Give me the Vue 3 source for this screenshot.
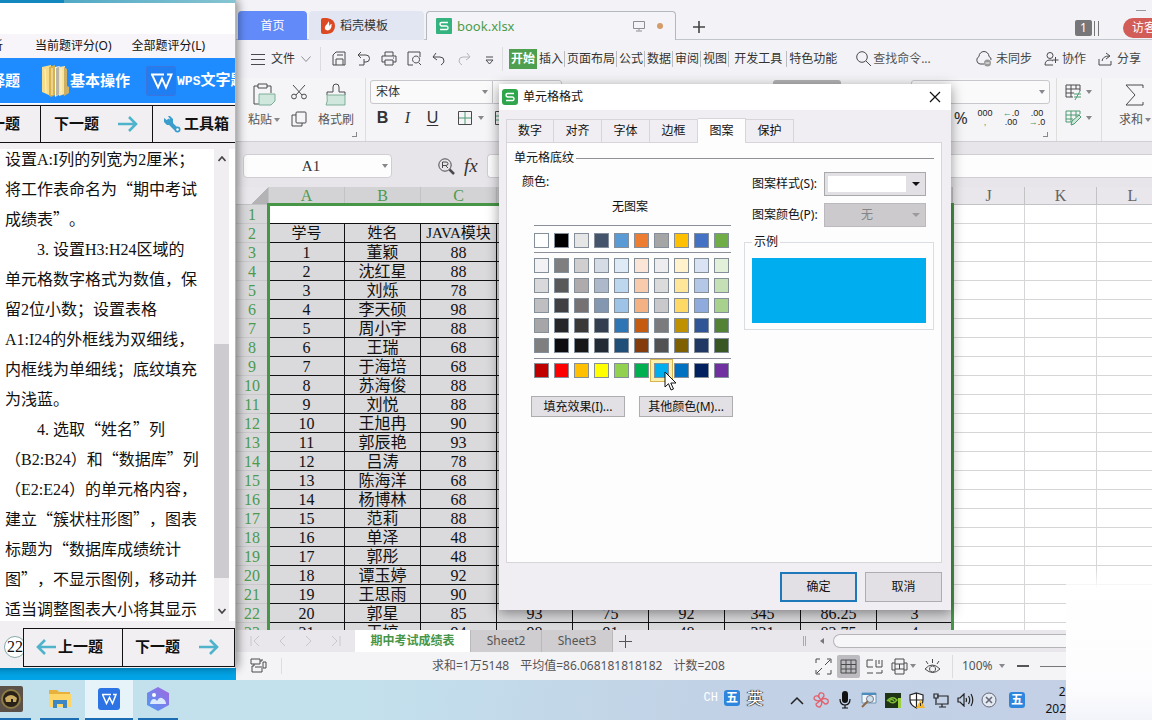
<template>
  <div class="desktop" lang="zh-CN">
    <main class="workspace">
      <!-- 表格窗口 -->
      <section class="wps">
        <header class="tabbar">
          <button class="tab tab--home">首页</button>
          <button class="tab tab--docer">
            <svg width="14" height="16" viewBox="0 0 14 16"><path d="M0 2q0-2 2-2h4q8 1 8 8t-8 8H2q-2 0-2-2z" fill="#dc4a24" /><path d="M7 3c1 3-4 4-3 8 1 2 5 2 6-1 1-2 0-3 1-4-2 0-3 2-3 3 0-2 1-4-1-6z" fill="#fff" /></svg>
            稻壳模板
          </button>
          <div class="tab tab--book">
            <svg width="16" height="16" viewBox="0 0 16 16"><rect width="16" height="16" rx="1" fill="#35b37e" /><path d="M12 4.500H5.500Q4 4.500 4 6t1.500 2h5Q12 8 12 9.800t-1.500 1.700H4" fill="none" stroke="#fff" stroke-width="1.400" /></svg>
            <span class="tab__name">book.xlsx</span>
            <svg class="line grey" width="12" height="12" viewBox="0 0 12 12"><path d="M.5 1.500h11v7H.5zM6 8.500v2M3 11h6" /></svg>
            <i class="dot"></i>
          </div>
          <button class="tab-add" aria-label="新建"><svg width="12" height="12" viewBox="0 0 12 12"><path d="M6 0v12M0 6h12" stroke="#444" stroke-width="1.600" /></svg></button>
          <div class="tabbar__right">
            <span class="count">1</span><i class="bars"></i>
            <button class="guest">访客登录</button>
            <i class="minimise"></i>
          </div>
        </header>

        <nav class="menubar">
          <button class="file">
            <svg class="line" width="14" height="11" viewBox="0 0 14 11"><path d="M0 .5h14M0 5.500h14M0 10.500h14" /></svg>
            文件
            <svg class="line grey" width="10" height="6" viewBox="0 0 10 6"><path d="M.5.5 5 5.500 9.500.5" /></svg>
          </button>
          <div class="quick">
            <button v-for="q in quick" :key="q.name" :aria-label="q.name">
              <svg class="line" :class="{ faint: q.faint }" width="16" height="16" viewBox="0 0 16 16"><path :d="q.d" /></svg>
            </button>
          </div>
          <button v-for="m in menus" :key="m" class="menu" :class="{ 'menu--on': m === '开始', 'menu--wide': m === '开发工具' }">{{ m }}</button>
          <label class="search">
            <svg class="line" width="16" height="16" viewBox="0 0 16 16"><circle cx="6" cy="6" r="5.300" /><path d="m10 10 5 5" /></svg>
            <input type="text" placeholder="查找命令..." />
          </label>
          <div class="menubar__right">
            <button><svg class="line" width="18" height="16" viewBox="0 0 18 16"><path d="M9 13H5a4 4 0 0 1-1-7.500 5 5 0 0 1 10 0Q16.500 6.500 16 9" /><circle cx="12.500" cy="12" r="3.500" fill="#999" stroke="none" /><path d="M10.500 12h4" stroke="#fff" /></svg>未同步</button>
            <button><svg class="line" width="15" height="14" viewBox="0 0 15 14"><circle cx="6" cy="3.500" r="3" /><path d="M9 13H1q0-5 5-5 2 0 3 1M11.500 5v6M8.500 8h6" /></svg>协作</button>
            <button><svg class="line" width="16" height="14" viewBox="0 0 16 14"><path d="M1 7v6h12V9M4 9q1-5 7-5M8 1l4 3-4 3" /></svg>分享</button>
          </div>
        </nav>

        <div class="ribbon">
          <div class="clip">
            <button class="clip__big">
              <svg class="line" width="24" height="24" viewBox="0 0 24 24"><path d="M6 3H2v18h5M15 3h4v7M6 1h9v4H6z" /><path d="M7 11h16v7l-4 4H7z" fill="#cfe7dc" stroke="#7fae98" /></svg>
              <span>粘贴<i class="caret"></i></span>
            </button>
            <div class="clip__pair">
              <button aria-label="剪切"><svg class="line" width="16" height="15" viewBox="0 0 16 15"><path d="m2 0 9 10M14 0 5 10" /><circle cx="3" cy="11.500" r="2.400" /><circle cx="13" cy="11.500" r="2.400" /></svg></button>
              <button aria-label="复制"><svg class="line" width="16" height="16" viewBox="0 0 16 16"><rect x="5" y="1" width="10" height="11" rx="1" /><path d="M5 4H1v11h10v-3" /></svg></button>
            </div>
            <button class="clip__big">
              <svg class="line" width="22" height="24" viewBox="0 0 22 24"><path d="M2 12V9h6V4q0-3 3-3t3 3v5h6v3" /><path d="M2 12h18v10H1q2-3 1-10z" fill="#cfe7dc" stroke="#7fae98" /></svg>
              <span>格式刷</span>
            </button>
            <i class="corner"></i>
          </div>
          <div class="fonts">
            <div class="fonts__row">
              <label class="combo"><select aria-label="字体"><option>宋体</option></select><i class="caret"></i></label>
              <label class="combo combo--size"><select aria-label="字号"><option>12</option></select><i class="caret"></i></label>
            </div>
            <div class="fonts__row fonts__row--marks">
              <button class="b">B</button><button class="it">I</button><button class="u">U</button>
              <button aria-label="边框"><svg class="line" width="14" height="14" viewBox="0 0 14 14"><path d="M.5.5h13v13H.5z" /><path d="M7 1v12M1 7h12" stroke="#4d9a70" /></svg><i class="caret"></i></button>
              <button aria-label="填充"><svg class="line" width="14" height="14" viewBox="0 0 14 14"><path d="M13 .5H.5v13H13" /><path d="M1 5h12M1 9h12M5 13l8-8" stroke="#4d9a70" /></svg></button>
            </div>
          </div>
          <button class="merge" aria-label="合并居中"></button>
          <div class="number">
            <label class="combo combo--num"><select aria-label="数字格式"><option>常规</option></select><i class="caret"></i></label>
            <div class="number__row">
              <button class="pct">%</button>
              <button class="digits">000<br /><em>,</em></button>
              <button class="digits"><em>←</em>.0<br />.00</button>
              <button class="digits">.00<br /><em>→</em>.0</button>
            </div>
            <i class="corner"></i>
          </div>
          <div class="cells">
            <button aria-label="条件格式"><svg class="line" width="17" height="16" viewBox="0 0 17 16"><path d="M8 13H1V1h14v6M1 5h14M1 9h8M6 1v12M11 1v4" /><path d="M9 10h7M9 13h7M15 7l-5 9" stroke="#4d9a70" /></svg><i class="caret"></i></button>
            <button aria-label="表格样式"><svg class="line" width="17" height="16" viewBox="0 0 17 16"><path d="M6 12H1V1h14v3M1 5h14M1 9h7M6 1v11M11 1v6" stroke="#4d9a70" /><path d="m7 11 7-6 2 2-7 7-3 1z" fill="#cfe7dc" stroke="#4d9a70" /></svg><i class="caret"></i></button>
          </div>
          <button class="sum">
            <svg class="line" width="20" height="22" viewBox="0 0 20 22"><path d="M18 4V1H1l9 10L1 21h17v-3" /></svg>
            <span>求和<i class="caret"></i></span>
          </button>
        </div>

        <div class="formula">
          <label class="namebox"><input value="A1" aria-label="名称框" /><i class="caret"></i></label>
          <div class="formula__icons">
            <svg class="line" width="17" height="17" viewBox="0 0 17 17"><circle cx="7" cy="7" r="6.200" /><path d="M4.500 10V4H8q2 0 2 1.700T8 7.500H4.500M7.500 7.500 10 10" /><path d="m11.500 11.500 4.500 4.500" stroke-width="2.500" /></svg>
            <span class="fx">fx</span>
          </div>
          <input class="formula__input" aria-label="编辑栏" />
        </div>

        <div class="sheet">
          <table>
            <colgroup>
              <col class="col-head" />
              <col v-for="c in 9" :key="c" class="col-data" />
              <col v-for="c in 4" :key="'e' + c" class="col-blank" />
            </colgroup>
            <thead>
              <tr>
                <th class="all"></th>
                <th v-for="(c, i) in columns" :key="c" :class="{ picked: i < 9 }">{{ c }}</th>
              </tr>
            </thead>
            <tbody>
              <tr>
                <th>1</th>
                <td class="cell cell--title" colspan="9"></td>
                <td v-for="n in 4" :key="n"></td>
              </tr>
              <tr v-for="(r, i) in rows" :key="i" :class="{ heading: i === 0 }">
                <th>{{ i + 2 }}</th>
                <td v-for="n in 9" :key="n" class="cell">{{ r[n - 1] }}</td>
                <td v-for="n in 4" :key="'e' + n"></td>
              </tr>
            </tbody>
          </table>
          <i class="selection"></i>
        </div>

        <div class="sheetbar">
          <div class="pager">
            <svg v-for="d in pager" :key="d" width="10" height="12" viewBox="0 0 10 12"><path :d="d" fill="none" stroke="#c9c7cb" /></svg>
          </div>
          <button class="stab stab--on">期中考试成绩表</button>
          <button class="stab">Sheet2</button>
          <button class="stab">Sheet3</button>
          <button class="stab-add" aria-label="新建工作表"><svg width="13" height="13" viewBox="0 0 13 13"><path d="M6.500 0v13M0 6.500h13" stroke="#555" /></svg></button>
          <div class="hscroll"><i class="grip"></i><span class="hscroll__arrow"></span><span class="hscroll__track"></span></div>
        </div>

        <footer class="status">
          <svg class="status__rec line" width="17" height="16" viewBox="0 0 17 16"><path d="M1 1h9v5H1zM10 3h2v-2M4 6v2H2v6h10v-4M5 9h7M13 4h3v6h-3z" /></svg>
          <p class="status__text"><span>求和=1万5148</span><span>平均值=86.068181818182</span><span>计数=208</span></p>
          <div class="views">
            <button v-for="v in views" :key="v.name" :aria-label="v.name" :class="{ on: v.name === '普通' }">
              <svg class="line" width="17" height="17" viewBox="0 0 17 17"><path :d="v.d" /></svg><i v-if="v.name === '阅读'" class="caret"></i>
            </button>
          </div>
          <div class="zoom">
            <span>100%</span><i class="caret"></i><i class="minus"></i>
            <input type="range" min="10" max="400" value="250" aria-label="缩放" />
          </div>
        </footer>
      </section>

      <!-- 答题窗口 -->
      <section class="exam">
        <div class="exam__strip"></div>
        <div class="exam__title"></div>
        <div class="exam__menu"><button class="first">操作解析</button><button>当前题评分(O)</button><button>全部题评分(L)</button></div>
        <div class="exam__types">
          <button class="t-choice">选择题</button>
          <button class="t-basic">
            <svg width="28" height="34" viewBox="0 0 28 34"><path d="m1 3 9-2v31l-9-4z" fill="#f6dc8a" /><path d="m8 3 6-2v30l-4 2-2-2z" fill="#d6b252" /><path d="m14 3 5-1v28l-5 3z" fill="#fff" /><path d="m15 4 4-2v28l-4 2z" fill="#b8b4a6" /><path d="m18 3 6-1v28l-6 2z" fill="#f5e4a4" /><path d="m23 3 3 2v17l2 1v6l-5 3z" fill="#ceb064" /><path d="m4 5 1 24M11 4v27M20 4v26" stroke="#fff4c4" /></svg>
            基本操作
          </button>
          <button class="t-word">
            <svg width="30" height="30" viewBox="0 0 30 30"><rect x=".5" y=".5" width="29" height="29" rx="2" fill="#1f7ff2" stroke="#3b74dd" /><path d="M5 8.500h13M6 8.500l6 13 4-9 4 9 5.500-13H21" fill="none" stroke="#fff" stroke-width="1.900" /></svg>
            <span><b class="latin">WPS</b>文字题</span>
          </button>
        </div>
        <div class="exam__tools">
          <button class="w-prev">上一题</button>
          <button class="w-next">下一题<svg width="20" height="16" viewBox="0 0 20 16"><path d="M0 8h18M11 1l7 7-7 7" fill="none" stroke="#4fb4cb" stroke-width="2.600" /></svg></button>
          <button class="w-box"><svg width="18" height="18" viewBox="0 0 18 18"><path d="m4 5 9 9" stroke="#3a9dcb" stroke-width="4" /><path d="M1 3v4l3 3h4l2-2V4L7 1H5l2 3-2 2z" fill="#3a9dcb" /><circle cx="14.500" cy="14.500" r="3" fill="#3a9dcb" /><circle cx="14.500" cy="14.500" r="1.200" fill="#fff" /></svg>工具箱</button>
        </div>
        <div class="exam__body">
          <div class="question">
            <p v-for="(l, i) in lines" :key="i" :class="{ indent: /^\d/.test(l) }"><span v-for="(s, k) in split(l)" :key="k" :class="{ han: s.han }">{{ s.text }}</span></p>
          </div>
          <div class="vscroll">
            <svg width="8" height="6" viewBox="0 0 8 6"><path d="m.5 5 3.500-4 3.500 4" /></svg>
            <span class="vscroll__track"><i></i></span>
            <svg width="8" height="6" viewBox="0 0 8 6"><path d="m.5 1 3.500 4 3.500-4" /></svg>
          </div>
        </div>
        <div class="exam__foot">
          <span class="number-ring">22</span>
          <div class="foot-box">
            <button class="f-prev"><svg width="20" height="16" viewBox="0 0 20 16"><path d="M20 8H2M9 1 2 8l7 7" fill="none" stroke="#4fb4cb" stroke-width="2.600" /></svg>上一题</button>
            <button class="f-next">下一题<svg width="20" height="16" viewBox="0 0 20 16"><path d="M0 8h18M11 1l7 7-7 7" fill="none" stroke="#4fb4cb" stroke-width="2.600" /></svg></button>
          </div>
        </div>
      </section>

      <!-- 单元格格式对话框 -->
      <section class="dialog" role="dialog" aria-label="单元格格式">
        <header class="dialog__head">
          <svg width="16" height="16" viewBox="0 0 16 16"><rect width="16" height="16" rx="3" fill="#2fa64c" /><path d="M12 4.500H5.500Q4 4.500 4 6t1.500 2h5Q12 8 12 9.800t-1.500 1.700H4" fill="none" stroke="#fff" stroke-width="1.400" /></svg>
          <h1>单元格格式</h1>
          <button aria-label="关闭"><svg width="12" height="12" viewBox="0 0 12 12"><path d="m1 1 10 10M11 1 1 11" stroke="#111" stroke-width="1.200" /></svg></button>
        </header>
        <div class="dialog__tabs">
          <button v-for="t in tabs" :key="t" :class="{ on: t === activeTab }" @click="activeTab = t">{{ t }}</button>
        </div>
        <div class="pane">
          <h2>单元格底纹</h2>
          <div class="pane__cols">
            <div class="colors">
              <p class="colors__label">颜色:</p>
              <button class="none">无图案</button>
              <div v-for="(group, g) in palette" :key="g" class="group">
                <div v-for="(row, r) in group" :key="r" class="swatches">
                  <button v-for="c in row" :key="c" class="swatch" :class="{ 'swatch--on': c === picked }" :style="{ backgroundColor: c }" :aria-label="c" @click="picked = c">
                    <svg v-if="c === '#00aeef'" class="cursor" width="13" height="20" viewBox="0 0 13 20"><path d="M1 1v15l3.500-3.300L7 19l2.500-1-2.700-6H12z" fill="#fff" stroke="#111" /></svg>
                  </button>
                </div>
              </div>
              <div class="more"><button>填充效果(I)...</button><button>其他颜色(M)...</button></div>
            </div>
            <div class="pattern">
              <div class="field"><label for="style">图案样式(S):</label><span class="drop"><select id="style"><option></option></select><i></i></span></div>
              <div class="field"><label for="pcolor">图案颜色(P):</label><span class="drop drop--off"><select id="pcolor" disabled><option>无</option></select><i></i></span></div>
              <fieldset><legend>示例</legend><div class="sample" :style="{ backgroundColor: picked }"></div></fieldset>
            </div>
          </div>
        </div>
        <footer class="dialog__foot"><button class="ok">确定</button><button>取消</button></footer>
      </section>
    </main>

    <footer class="taskbar">
      <div class="apps">
        <button class="app-a"><svg width="26" height="26" viewBox="0 0 26 26"><rect width="26" height="26" rx="2" fill="#5c5148" /><circle cx="14" cy="13" r="9" fill="#292018" stroke="#8d7b45" stroke-width="2" /><path d="M8 12q6-6 12 0l-1 4h-3v-3h-2v3H9z" fill="#c9ab61" /></svg></button>
        <button class="app-b"><svg width="24" height="22" viewBox="0 0 24 22"><path d="M1 2h8l2 2h11v15H1z" fill="#e8b13a" /><path d="M1 6h22v13H1z" fill="#ffd768" /><path d="M5 20v-8h14v8h-4v-4H9v4z" fill="#3d88c4" /></svg></button>
        <button class="app-c"><svg width="22" height="22" viewBox="0 0 22 22"><rect width="22" height="22" rx="3" fill="#2c73e5" /><path d="M4 6.500h9M4.500 6.500l4 9 3-6 3 6 3.500-9H15" fill="none" stroke="#fff" stroke-width="1.500" /></svg></button>
        <button class="app-d"><svg width="24" height="24" viewBox="0 0 24 24"><defs><linearGradient id="hex" x1="0" y1="1" x2="1" y2="0"><stop offset="0" stop-color="#4d9cf5" /><stop offset="1" stop-color="#a366e0" /></linearGradient></defs><path d="m12 0 11 6v12l-11 6-11-6V6z" fill="url(#hex)" /><path d="M4 17q1-5 4-5 2 0 3 2 2-4 5-3 4 2 4 6z" fill="#dceaff" /><circle cx="8" cy="8" r="2" fill="#fff" /></svg></button>
      </div>
      <div class="ime"><span class="ime__ch">CH</span><span class="wu">五</span><span class="ime__en">英</span></div>
      <div class="tray">
        <button aria-label="更多"><svg width="14" height="9" viewBox="0 0 14 9"><path d="m1 8 6-6 6 6" fill="none" stroke="#222" stroke-width="1.500" /></svg></button>
        <button aria-label="花"><svg width="16" height="16" viewBox="0 0 16 16"><g fill="none" stroke="#e2606c" stroke-width="1.300"><path d="M8 8Q4 4 7 1q4-1 4 3L8 8q4-3 7 0 1 4-3 4L8 8q2 4-1 7-4 0-4-3l5-4Q4 10 1 7q0-4 4-3z" /></g></svg></button>
        <button aria-label="麦克风"><svg width="12" height="18" viewBox="0 0 12 18"><rect x="3" width="6" height="12" rx="3" fill="#111" /><path d="M1 8q0 6 5 6t5-6M6 14v3M3 17h6" fill="none" stroke="#111" stroke-width="1.200" /></svg></button>
        <button aria-label="截图"><svg width="16" height="16" viewBox="0 0 16 16"><path d="M1 1h14v10H1z" fill="#eef4f8" stroke="#6f9ab8" /><path d="M1 1h14v2H1z" fill="#4d8cc0" /><circle cx="9" cy="7" r="3.500" fill="#cfe2ee" stroke="#778" /><path d="m7 9-6 6" stroke="#8a6a4a" stroke-width="2" /></svg></button>
        <button aria-label="显卡"><svg width="16" height="15" viewBox="0 0 16 15"><path d="M0 0h16v15H0z" fill="#1f3414" /><path d="M2 8q5-6 10-1-4 5-8 1 3-3 5 0" fill="none" stroke="#7ebc33" stroke-width="1.500" /><path d="M13 5h3v10h-3z" fill="#9bd03e" /></svg></button>
        <button aria-label="安全"><svg width="16" height="17" viewBox="0 0 16 17"><path d="m7.500 1 6.500 2v5q0 5-6.500 8Q1 13 1 8V3zM7.500 1v15M1 8h13" fill="#fff" stroke="#222" stroke-width="1.200" /><path d="m11.500 8 4.500 8H7z" fill="#f4b52a" /><path d="M11.500 11v3" stroke="#333" /></svg></button>
        <button aria-label="网络"><svg width="16" height="15" viewBox="0 0 16 15"><path d="M4 3h11v8H4M9 11v3M6 14h7M1 1h4v4H1zM3 5v7" fill="none" stroke="#222" stroke-width="1.200" /></svg></button>
        <button aria-label="音量"><svg width="17" height="14" viewBox="0 0 17 14"><path d="M1 5h2l4-4v12L3 9H1zM9 5q1 2 0 4M11.500 3q2.500 4 0 8M14 1q3.500 6 0 12" fill="none" stroke="#222" stroke-width="1.200" /></svg></button>
        <button aria-label="断开"><svg width="16" height="16" viewBox="0 0 16 16"><circle cx="8" cy="8" r="7" fill="#e3eaf2" stroke="#667" /><path d="m5 5 6 6M11 5l-6 6" stroke="#667" stroke-width="1.600" /></svg></button>
      </div>
      <span class="wu wu--tray">五</span>
      <div class="clock"><span>21:36</span><span>2021/3/24</span></div>
    </footer>
    <div class="ghost"></div>
  </div>
</template>

<script setup>
import { ref } from 'vue'

const activeTab = ref('图案')
const picked = ref('#00aeef')   // 当前底纹颜色

const tabs = ['数字', '对齐', '字体', '边框', '图案', '保护']
const menus = ['开始', '插入', '页面布局', '公式', '数据', '审阅', '视图', '开发工具', '特色功能']
const columns = ['A', 'B', 'C', 'D', 'E', 'F', 'G', 'H', 'I', 'J', 'K', 'L', 'M']

// 快速访问工具栏
const quick = [
  { name: '保存', d: 'M2 14V4l3-3h9v13zM5 14V8h7v6M6 4h6' },
  { name: '输出', d: 'M2 4h8a3.500 3.500 0 0 1 0 7H8M5 1 2 4l3 3M8 8v6H3' },
  { name: '打印', d: 'M4 5V1h8v4M4 11H1V5h14v6h-3M4 9h8v5H4zM12 7h1' },
  { name: '预览', d: 'M7 14H2V1h12v5M10 5a3.500 3.500 0 1 0 .1 0M12.500 11.500 15 14' },
  { name: '撤销', d: 'M5 2 2 6l4 3M2 6h7q4 0 4 4 0 2-3 4' },
  { name: '恢复', d: 'M11 2l3 4-4 3M14 6H7q-4 0-4 4 0 2 3 4', faint: true },
  { name: '自定义', d: 'M5 6h7M5 9l3.500 4L12 9z' }
]

const views = [
  { name: '全屏', d: 'M1 5V1h4M12 1h4v4M16 12v4h-4M5 16H1v-4M10 7l5-5M7 10l-5 5' },
  { name: '普通', d: 'M1 2h15v13H1zM1 6.500h15M1 11h15M6 2v13M11 2v13' },
  { name: '分页', d: 'M7 9H1V2h6M7 15H1M10 2v7h6V2M16 12v3h-6M13 2v4' },
  { name: '阅读', d: 'M4 1h9v15H4zM4 6h9M4 11h9M4 5H1v7h3M13 5h3v7h-3M8.500 6v5' },
  { name: '护眼', d: 'M1 11q7-8 15 0-7 7-15 0M8.500 8a3 3 0 1 0 .1 0M8.500 5V1M4 6 2 3M13 6l2-3' }
]

const pager = ['M1 1v10M9 1 4 6l5 5', 'M8 1 3 6l5 5', 'M2 1l5 5-5 5', 'M9 1v10M1 1l5 5-5 5']

const rows = [
  ['学号', '姓名', 'JAVA模块'],
  [1, '董颖', 88],
  [2, '沈红星', 88],
  [3, '刘烁', 78],
  [4, '李天硕', 98],
  [5, '周小宇', 88],
  [6, '王瑞', 68],
  [7, '于海培', 68],
  [8, '苏海俊', 88],
  [9, '刘悦', 88],
  [10, '王旭冉', 90],
  [11, '郭辰艳', 93],
  [12, '吕涛', 78],
  [13, '陈海洋', 68],
  [14, '杨博林', 68],
  [15, '范莉', 88],
  [16, '单泽', 48],
  [17, '郭彤', 48],
  [18, '谭玉婷', 92],
  [19, '王思雨', 90],
  [20, '郭星', 85, 93, 75, 92, 345, '86.25', 3],
  [21, '王婷', 94, 98, 91, 48, 331, '82.75', 4]
]

const palette = [
  [['#ffffff', '#000000', '#e7e6e6', '#44546a', '#5b9bd5', '#ed7d31', '#a5a5a5', '#ffc000', '#4472c4', '#70ad47']],
  [
    ['#f2f2f5', '#7f7f80', '#d0cecf', '#d6dce5', '#deebf7', '#fbe5d6', '#ededf0', '#fff2cc', '#dae3f3', '#e2f0d9'],
    ['#d9d9dc', '#595959', '#afabac', '#adb9ca', '#bdd7ee', '#f8cbad', '#dbdbdc', '#ffe699', '#b4c7e7', '#c5e0b4'],
    ['#bfbfc1', '#404042', '#767172', '#8497b0', '#9dc3e6', '#f4b183', '#c9c9cb', '#ffd966', '#8faadc', '#a9d18e'],
    ['#a6a6a8', '#262628', '#3b3838', '#333f50', '#2e75b6', '#c55a11', '#7b7b7d', '#bf9000', '#2f5597', '#548235'],
    ['#7f7f7f', '#0d0d0f', '#171717', '#222a35', '#1f4e79', '#843c0c', '#525252', '#7f6000', '#203864', '#385723']
  ],
  [['#c00000', '#ff0000', '#ffc001', '#ffff00', '#92d050', '#00b050', '#00aeef', '#0070c0', '#002060', '#7030a0']]
]

const lines = [
  '设置A:I列的列宽为2厘米；',
  '将工作表命名为“期中考试',
  '成绩表”。',
  '3. 设置H3:H24区域的',
  '单元格数字格式为数值，保',
  '留2位小数；设置表格',
  'A1:I24的外框线为双细线，',
  '内框线为单细线；底纹填充',
  '为浅蓝。',
  '4. 选取“姓名”列',
  '（B2:B24）和“数据库”列',
  '（E2:E24）的单元格内容，',
  '建立“簇状柱形图”，图表',
  '标题为“数据库成绩统计',
  '图”，不显示图例，移动并',
  '适当调整图表大小将其显示'
]

// 西文和汉字分开排，引号跟随汉字取全角
function split(line) {
  return line.split(/([\x20-\x7e]+)/).filter(Boolean).map(text => ({ text, han: !/^[\x20-\x7e]/.test(text) }))
}
</script>

<style>
html, body { margin: 0; overflow: hidden; }
</style>

<style scoped>
.desktop {
  position: relative;
  display: flex;
  flex-direction: column;
  height: 100vh;
  overflow: hidden;
  background: #03a5e8;
  color: #333;
  font: 12px/16px "Noto Sans", "Noto Sans CJK SC", sans-serif;
  cursor: default;
}
.desktop * { box-sizing: border-box; }
p, h1, h2 { margin: 0; font: inherit; }
button, input, select {
  margin: 0;
  padding: 0;
  border: 0;
  border-radius: 0;
  background: none;
  color: inherit;
  font: inherit;
  outline: none;
}
button { white-space: nowrap; }
select { appearance: none; }
svg { display: block; flex: none; }
.line { fill: none; stroke: #4a4a4d; stroke-width: 1; }
.grey { stroke: #8e8e92; }
.faint { stroke: #b6b6ba; }
.caret {
  display: inline-block;
  flex: none;
  border: 3px solid transparent;
  border-top: 4px solid #88888c;
  border-bottom: 0;
}

.workspace { position: relative; flex: 1; min-height: 0; }

/* 表格窗口 */
.wps {
  position: absolute;
  inset: 0 0 0 236px;
  display: flex;
  flex-direction: column;
  overflow: hidden;
  background: #f3f3f7;
}
.tabbar {
  display: flex;
  align-items: flex-end;
  height: 40px;
  padding: 0 0 0 2px;
  flex: none;
  box-shadow: inset 0 -1px #c3c5cc;
}
.tab {
  display: flex;
  align-items: center;
  gap: 5px;
  height: 29px;
  border-radius: 4px 4px 0 0;
}
.tab--home { width: 69px; justify-content: center; background: #628af8; color: #fff; }
.tab--docer { width: 115px; margin: 0 2px; padding-left: 12px; background: #e2e6f2; }
.tab--book {
  width: 250px;
  padding: 0 12px 0 9px;
  border: 1px solid #b4b7bf;
  border-bottom: 0;
  background: #f4f4f8;
  color: #4c9b4c;
  font-size: 13px;
}
.tab__name { flex: 1; }
.dot { width: 6px; height: 6px; margin-left: 7px; border-radius: 50%; background: #d59c67; }
.tab-add { align-self: center; margin: 13px 0 0 17px; }
.tabbar__right { position: relative; display: flex; align-items: center; height: 24px; margin-left: auto; }
.count { width: 17px; height: 16px; border-radius: 2px; background: #77777a; color: #fff; text-align: center; }
.bars { width: 5px; height: 15px; margin: 0 24px 0 2px; border: 1px solid #77777a; border-width: 0 1px; }
.guest { width: 29px; height: 20px; padding-left: 9px; border-radius: 10px 0 0 10px; background: #d25c58; color: #fff; overflow: hidden; text-align: left; }
.minimise { position: absolute; top: -6px; right: 6px; width: 10px; height: 1px; background: #999; }

.menubar { display: flex; align-items: center; height: 38px; flex: none; padding-left: 15px; white-space: nowrap; }
.file { display: flex; align-items: center; gap: 6px; height: 24px; padding-right: 9px; border-right: 1px solid #dcdce0; }
.quick { display: flex; height: 24px; margin: 0 6px 0 5px; padding-right: 1px; border-right: 1px solid #dcdce0; }
.quick button { display: grid; place-items: center; width: 25px; }
.menu { height: 16px; padding: 0 1px 0 2px; border-right: 1px solid #bbbbc0; }
.menu--on { height: 20px; padding: 0 2px; border: 0; background: #4f9f50; color: #fff; font-weight: 700; }
.menu--wide { padding: 0 4px 0 5px; }
.menu:last-of-type { border: 0; }
.search { display: flex; align-items: center; gap: 1px; margin-left: 18px; }
.search input { width: 72px; }
.search input::placeholder { color: #555; opacity: 1; }
.menubar__right { display: flex; gap: 12px; margin-left: auto; padding-right: 11px; color: #444; }
.menubar__right button { display: flex; align-items: center; gap: 3px; }

.ribbon {
  position: relative;
  display: flex;
  height: 64px;
  flex: none;
  background: #f5f5f8;
  border-bottom: 1px solid #d0d0d4;
}
.clip { position: relative; display: flex; gap: 11px; width: 130px; padding: 5px 0 0 12px; border-right: 1px solid #dededf; color: #555; }
.clip__big { display: flex; flex-direction: column; align-items: center; gap: 5px; height: 48px; }
.clip__big span { display: flex; align-items: center; gap: 2px; }
.clip__pair { display: flex; flex-direction: column; gap: 11px; padding-top: 2px; }
.corner { position: absolute; right: 8px; bottom: 4px; width: 5px; height: 5px; border: 1px solid #888; border-width: 0 1px 1px 0; }
.fonts { padding: 2px 0 0 4px; }
.fonts__row { display: flex; }
.fonts__row--marks { gap: 0; padding-top: 5px; }
.fonts__row--marks button { display: flex; align-items: center; justify-content: center; gap: 6px; width: 25px; font: 16px/18px "Liberation Sans", sans-serif; }
.fonts__row--marks button:nth-child(4) { width: 36px; margin-left: 8px; }
.fonts__row--marks .b { font-weight: 700; }
.fonts__row--marks .it { font-family: "Liberation Serif", serif; font-style: italic; }
.fonts__row--marks .u { text-decoration: underline; text-underline-offset: 2px; }
.combo {
  display: flex;
  align-items: center;
  width: 123px;
  height: 24px;
  padding: 0 4px 0 5px;
  border: 1px solid #c8c8cc;
  border-radius: 3px 0 0 3px;
  background: #fafafb;
}
.combo select { flex: 1; min-width: 0; }
.combo--size { width: 70px; margin-left: -1px; border-radius: 0 3px 3px 0; }
.combo--num { width: 139px; border-radius: 3px; }
.merge { position: absolute; top: 2px; left: 537px; width: 68px; height: 46px; border-radius: 3px; background: #b3b3b5; }
.number { position: relative; width: 146px; margin-left: auto; padding-top: 2px; border-right: 1px solid #dededf; }
.number__row { display: flex; align-items: center; justify-content: flex-end; gap: 8px; padding: 5px 10px 0 0; }
.pct { font-size: 17px; }
.digits { font: 9px/9px "Liberation Sans", sans-serif; width: 18px; color: #222; }
.digits em { font-style: normal; color: #3f9b68; }
.cells { display: flex; flex-direction: column; gap: 10px; width: 45px; padding: 6px 0 0 8px; border-right: 1px solid #dededf; }
.cells button { display: flex; align-items: center; gap: 4px; }
.sum { display: flex; flex-direction: column; align-items: center; gap: 6px; width: 50px; padding: 6px 0 0 16px; color: #555; }
.sum span { display: flex; align-items: center; gap: 2px; }

.formula { display: flex; align-items: center; height: 45px; flex: none; padding: 3px 0 0 7px; background: #e7e5e9; }
.namebox { display: flex; align-items: center; width: 149px; height: 24px; padding-right: 3px; border: 1px solid #d0ced2; border-radius: 4px; background: #fdfdfe; }
.namebox input { flex: 1; min-width: 0; padding-right: 4px; text-align: center; font: 15px/20px "Liberation Serif", serif; }
.formula__icons { display: flex; align-items: center; gap: 9px; margin: 0 9px 0 46px; }
.fx { font: italic 19px/20px "Liberation Serif", serif; }
.formula__input { flex: 1; height: 24px; border: 1px solid #d0ced2; border-right: 0; border-radius: 4px 0 0 4px; background: #fdfdfe; }

.sheet { position: relative; flex: 1; min-height: 0; overflow: hidden; background: #fff; }
table { width: 1005px; table-layout: fixed; border-spacing: 0; font: 16px/17px "Liberation Serif", "Noto Sans CJK SC", serif; color: #111; }
.col-head { width: 33px; }
.col-data { width: 76px; }
.col-blank { width: 72px; }
th, td { height: 19px; padding: 0; overflow: hidden; white-space: nowrap; text-align: center; font-weight: 400; border: 1px solid #d6d6d9; border-width: 0 1px 1px 0; }
thead th { height: 18px; background: #e9e7eb; border-color: #c3c3c6; color: #666; }
thead .picked { background: #d3d3d5; color: #4b9a4e; }
.all { background: linear-gradient(135deg, transparent 66%, #b3b3b5 66%) #e9e7eb; }
tbody th { background: #d8d8da; border-color: #c9c9cc; color: #4b9a4e; }
.cell { background: #dad9dc; border-color: #111; }
.cell--title { background: #fff; }
.heading .cell { font-size: 15px; }
.selection { position: absolute; top: 16px; left: 31px; bottom: -4px; width: 687px; border: 3px solid #479648; }

.sheetbar { display: flex; align-items: center; height: 22px; flex: none; background: #e9e7eb; }
.pager { display: flex; gap: 17px; width: 119px; padding-left: 14px; }
.stab { width: 71px; height: 22px; border-right: 1px solid #b9b8bb; background: #cfcdd0; color: #555; }
.stab--on { width: 116px; background: #fff; color: #479648; font-weight: 700; }
.stab-add { margin-left: 6px; }
.hscroll { display: flex; align-items: center; width: 349px; margin-left: auto; }
.grip { width: 3px; height: 10px; border: 1px solid #aaa; border-width: 0 1px; }
.hscroll__arrow { margin: 0 9px 0 14px; border: 3px solid transparent; border-right: 4px solid #777; border-left: 0; }
.hscroll__track { flex: 1; height: 14px; border: 1px solid #b5b5b8; border-right: 0; border-radius: 7px 0 0 7px; background: #f6f5f8; }

.status { display: flex; align-items: center; height: 28px; flex: none; padding-left: 14px; background: #f4f3f6; color: #555; white-space: nowrap; }
.status__rec { margin-right: 14px; }
.status__text { display: flex; flex: 1; gap: 11px; padding-left: 150px; border-left: 1px solid #dededf; }
.views { display: flex; align-items: center; padding-right: 7px; border-right: 1px solid #dcdce0; }
.views button { display: flex; align-items: center; justify-content: center; height: 23px; width: 26px; gap: 2px; }
.views button:nth-child(4) { width: 32px; }
.views .on { width: 23px; margin: 0 1px; border-radius: 2px; background: #bdbbbf; }
.zoom { display: flex; align-items: center; width: 199px; padding-left: 9px; }
.zoom .caret { margin: 0 12px 0 6px; }
.minus { width: 12px; height: 2px; margin-right: 11px; background: #555; }
.zoom input { appearance: none; flex: 1; min-width: 0; height: 1px; background: #777; }

/* 答题窗口 */
.exam {
  position: absolute;
  inset: 0 auto 12px -64px;
  display: flex;
  flex-direction: column;
  width: 300px;
  background: #f1eff2;
  color: #111;
  box-shadow: 2px 0 9px rgba(0, 0, 0, .45);
  white-space: nowrap;
  border-right: 1px solid #b8b8bc;
}
.exam button { flex: none; }
.exam__strip { height: 3px; background: linear-gradient(90deg, #1288be 128px, #52a9c5 128px, #86c4d2); }
.exam__title { height: 31px; background: #fff; }
.exam__menu { display: flex; align-items: center; gap: 20px; height: 24px; padding-left: 19px; background: #f7f5f9; }
.exam__menu .first { width: 60px; text-align: left; }
.exam__types,
.exam__tools,
.exam__foot { font: 700 15px/20px "Liberation Serif", "Noto Sans CJK SC", serif; }
.exam__types { display: flex; align-items: center; height: 46px; padding-left: 39px; background: #1e8cff; color: #fff; border-bottom: 1px solid #fff; overflow: hidden; }
.exam__types button { display: flex; align-items: center; gap: 1px; }
.t-basic { margin: 0 16px 0 21px; }
.latin { font: 700 13px/20px "Liberation Mono", monospace; }
.exam__tools { display: flex; height: 38px; margin-top: 1px; border: 1px solid #111; border-width: 1px 0; }
.exam__tools button { display: flex; align-items: center; border-right: 1px solid #111; }
.w-prev { width: 105px; padding-left: 39px; }
.w-next { width: 112px; padding-left: 13px; gap: 19px; }
.w-box { width: 82px; padding-left: 10px; gap: 3px; }
.exam__tools .w-box { border: 0; }
.exam__body { display: flex; flex: 1; min-height: 0; margin-top: 6px; background: #fff; }
.question { flex: 1; min-width: 0; margin-top: -6px; padding: 0 0 0 69px; overflow: hidden; font: 16px/30px "Liberation Serif", "Noto Sans CJK SC", serif; }
.question p { height: 30px; white-space: pre; text-spacing-trim: space-all; }
.question .indent { padding-left: 32px; }
.question .han { font-family: "Noto Sans CJK SC", sans-serif; }
.vscroll { display: flex; flex-direction: column; align-items: center; gap: 6px; width: 15px; margin-right: 6px; padding: 7px 0; background: #f0eef1; }
.vscroll svg { fill: none; stroke: #444; stroke-width: 1.600; }
.vscroll__track { display: flex; flex-direction: column; flex: 1; width: 100%; }
.vscroll__track i { height: 54%; margin: auto 0 24px; background: #cdcbcf; }
.exam__foot { display: flex; align-items: center; height: 47px; padding: 5px 0 0 68px; overflow: hidden; }
.number-ring { width: 22px; height: 22px; margin-right: -3px; border: 1px solid #8aa; border-radius: 50%; background: #fff; text-align: center; font-weight: 400; font-size: 16px; }
.foot-box { position: relative; display: flex; width: 212px; height: 39px; border: 1px solid #111; background: #f1eff2; }
.foot-box button { display: flex; align-items: center; }
.f-prev { width: 99px; padding-left: 12px; gap: 2px; border-right: 1px solid #111; }
.f-next { width: 111px; padding-left: 12px; gap: 19px; }

/* 对话框 */
.dialog {
  position: absolute;
  top: 84px;
  left: 499px;
  display: flex;
  flex-direction: column;
  width: 452px;
  height: 526px;
  background: #f0eef2;
  color: #111;
  box-shadow: 0 3px 12px rgba(0, 0, 0, .42);
}
.dialog__head { display: flex; align-items: center; gap: 5px; height: 26px; padding: 0 10px 0 3px; background: #fff; }
.dialog__head h1 { flex: 1; }
.dialog__tabs { display: flex; align-items: flex-end; height: 32px; padding-left: 7px; }
.dialog__tabs button { width: 48px; height: 23px; border: 1px solid #d7d5d9; border-bottom: 0; border-left-width: 0; }
.dialog__tabs button:first-child { border-left-width: 1px; }
.dialog__tabs .on { height: 25px; margin-bottom: -1px; background: #fdfdfe; z-index: 1; }
.pane { flex: 1; margin: 0 9px 0 7px; padding: 6px 7px; border: 1px solid #d7d5d9; background: #fdfdfe; }
.pane h2 { display: flex; align-items: center; gap: 2px; line-height: 18px; }
.pane h2::after { content: ''; flex: 1; height: 1px; background: #8f9195; }
.pane__cols { display: flex; justify-content: space-between; }
.colors { width: 220px; padding: 7px 0 0 8px; }
.none { display: block; margin: 9px 0 10px 90px; }
.group { width: 197px; margin-left: 12px; padding: 7px 0 4px; border-top: 1px solid #8b8f99; }
.group:nth-of-type(2) { padding: 5px 0 0; }
.group:nth-of-type(3) { padding: 4px 0 0; }
.swatches { display: flex; gap: 5px; margin-bottom: 5px; }
.group:first-of-type .swatches { margin-bottom: 0; }
.swatch { position: relative; width: 15px; height: 15px; border: 1px solid #858f99; }
.swatch--on { outline: 3px solid #fdf0ae; box-shadow: 0 0 0 4px #d7b64f; }
.cursor { position: absolute; top: 7px; left: 9px; z-index: 2; }
.more { display: flex; gap: 14px; margin: 13px 0 0 9px; }
.group + .more { padding-top: 5px; }
.more button { width: 94px; height: 21px; border: 1px solid #adadb0; background: #e2e0e4; }
.pattern { width: 190px; padding-top: 4px; }
.field { display: flex; align-items: center; justify-content: space-between; height: 25px; margin: 0 8px 6px; white-space: nowrap; }
.drop { position: relative; width: 102px; height: 24px; border: 1px solid #a9a9ac; background: #e2e0e4; }
.drop select { width: 100%; height: 100%; padding-left: 36px; background: linear-gradient(#fff, #fff) 3px 3px / 78px 16px no-repeat; }
.drop i { position: absolute; top: 9px; right: 5px; border: 4px solid transparent; border-top: 4px solid #111; border-bottom: 0; pointer-events: none; }
.drop--off { background: #cccacd; color: #858588; border-color: #bbb9bd; }
.drop--off select { background: none; opacity: 1; }
.drop--off i { border-top-color: #9a9a9c; }
fieldset { min-width: 0; margin: 0; padding: 7px 7px 6px; border: 1px solid #dadde2; }
legend { margin-left: 0; padding: 0 2px; line-height: 18px; }
.sample { height: 65px; }
.dialog__foot { display: flex; justify-content: flex-end; gap: 8px; height: 47px; padding: 9px 9px 0 0; }
.dialog__foot button { width: 77px; height: 30px; border: 1px solid #adadb0; background: #e2e0e4; }
.dialog__foot .ok { border: 2px solid #1f78b9; }

/* 任务栏 */
.taskbar { display: flex; align-items: center; height: 40px; flex: none; background: linear-gradient(100deg, #c3e1ed 30%, #c2d2e6 60%, #c3cfe5); color: #111; }
.apps { display: flex; flex: 1; height: 100%; }
.apps button { display: grid; place-items: center; border-bottom: 2px solid #1b6db3; }
.app-a { width: 31px; margin-right: 9px; }
.app-a svg { margin-left: -12px; }
.app-b { width: 39px; margin-right: 6px; }
.app-c { width: 48px; margin-right: 5px; background: #e6f3f9; }
.app-d { width: 40px; }
.ime { display: flex; align-items: center; margin: -4px 22px 0 0; }
.ime__ch { color: #fff; font: 12px/16px "Liberation Mono", monospace; }
.wu { width: 16px; height: 16px; border-radius: 3px; background: #2e86dc; color: #fff; text-align: center; font-weight: 700; }
.ime .wu { margin: 0 7px 0 6px; }
.ime__en { font-size: 16px; color: #fff; text-shadow: 0 0 1px #222, 1px 0 1px #222, -1px 0 1px #222; }
.tray { display: flex; }
.tray button { display: grid; place-items: center; width: 24px; height: 24px; }
.wu--tray { margin: 0 20px 0 8px; }
.clock { display: flex; flex-direction: column; gap: 1px; width: 107px; }
.clock span { width: 58px; text-align: center; }
.ghost {
  position: absolute;
  right: 0;
  bottom: 0;
  width: 86px;
  height: 152px;
  background: linear-gradient(180deg, rgba(255, 255, 255, 0), #fff 14%, #fcfcfe 80%, #f3f4fa);
  pointer-events: none;
}
</style>
